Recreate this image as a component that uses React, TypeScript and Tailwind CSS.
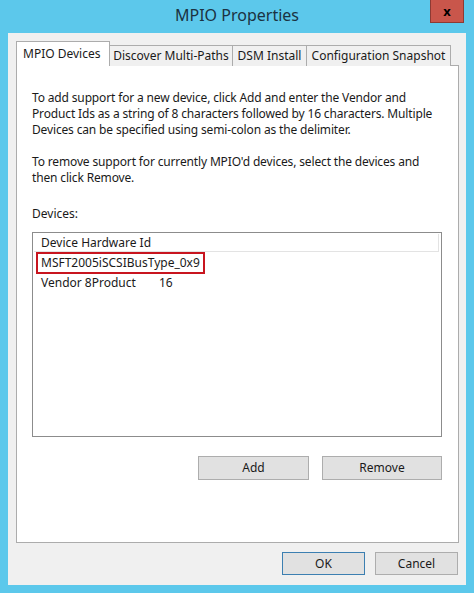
import React from "react";

const font = { fontFamily: '"Noto Sans", "Open Sans", sans-serif' };

export default function App() {
  return (
    <div
      className="w-[474px] h-[593px] bg-[#5cc8eb] flex flex-col text-[12px] text-[#1a1a1a]"
      style={font}
    >
      {/* title bar */}
      <div className="h-[33px] grid grid-cols-[1fr_auto_1fr]">
        <div />
        <div className="pt-[4px] text-[16px] text-[#1b3242] leading-[22px]">MPIO Properties</div>
        <div className="flex justify-end pr-[10px]">
          <div className="w-[34px] h-[23px] bg-[#c9564b] border border-[#8d3a33] border-t-0 flex items-center justify-center text-black font-bold text-[13px] leading-none">
            x
          </div>
        </div>
      </div>

      {/* client area */}
      <div className="mx-[8px] mb-[8px] flex-1 bg-[#f0f0f0] flex flex-col pl-[8px] pr-[7px] pt-[9px] pb-[10px]">
        {/* tabs */}
        <div className="flex items-end h-[24px] relative z-10">
          <div className="w-[94px] h-[25px] bg-white border border-[#acacac] border-b-0 px-[6px] pt-[3px] leading-[18px]">
            MPIO Devices
          </div>
          <div className="h-[21px] bg-[#f0f0f0] border border-[#acacac] border-l-0 border-b-0 w-[123px] text-center leading-[19px]">
            Discover Multi-Paths
          </div>
          <div className="h-[21px] bg-[#f0f0f0] border border-[#acacac] border-l-0 border-b-0 w-[74px] text-center leading-[19px]">
            DSM Install
          </div>
          <div className="h-[21px] bg-[#f0f0f0] border border-[#acacac] border-l-0 border-b-0 w-[144px] text-center leading-[19px]">
            Configuration Snapshot
          </div>
        </div>

        {/* panel */}
        <div className="flex-1 bg-white border border-[#acacac] -mt-px flex flex-col pl-[15px] pr-[16px] pt-[24px]">
          <p className="leading-[16px] tracking-[-0.15px] -mr-[8px]">
            To add support for a new device, click Add and enter the Vendor and Product Ids as a string of 8
            characters followed by 16 characters. Multiple Devices can be specified using semi-colon as the
            delimiter.
          </p>
          <p className="leading-[16px] mt-[16px] tracking-[-0.15px] pr-[20px]">
            To remove support for currently MPIO'd devices, select the devices and then click Remove.
          </p>
          <div className="mt-[20px] leading-[16px]">Devices:</div>

          {/* list */}
          <div className="mt-[10px] h-[205px] border border-[#8c8c8c] flex flex-col pt-[1px] pl-[1px] pr-[2px]">
            <div className="h-[18px] border-b border-r border-[#e3e3e3] bg-white pl-[7px] leading-[17px]">
              Device Hardware Id
            </div>
            <div className="flex">
              <div className="ml-[2px] h-[22px] border-2 border-[#c8151f] pl-[3px] pr-[3px] leading-[18px]">
                MSFT2005iSCSIBusType_0x9
              </div>
            </div>
            <div className="flex pl-[7px] leading-[18px]">
              <span className="w-[118px]">Vendor 8Product</span>
              <span>16</span>
            </div>
          </div>

          {/* buttons */}
          <div className="flex justify-end gap-[13px] mt-[19px]">
            <div className="w-[111px] h-[24px] bg-[#e1e1e1] border border-[#adadad] flex items-center justify-center">
              Add
            </div>
            <div className="w-[120px] h-[24px] bg-[#e1e1e1] border border-[#adadad] flex items-center justify-center">
              Remove
            </div>
          </div>
        </div>

        {/* bottom buttons */}
        <div className="flex justify-end gap-[10px] mt-[9px] pr-[1px]">
          <div className="w-[83px] h-[23px] bg-[#e1e1e1] border border-[#3c7fb1] flex items-center justify-center">
            OK
          </div>
          <div className="w-[83px] h-[23px] bg-[#e1e1e1] border border-[#adadad] flex items-center justify-center">
            Cancel
          </div>
        </div>
      </div>
    </div>
  );
}
